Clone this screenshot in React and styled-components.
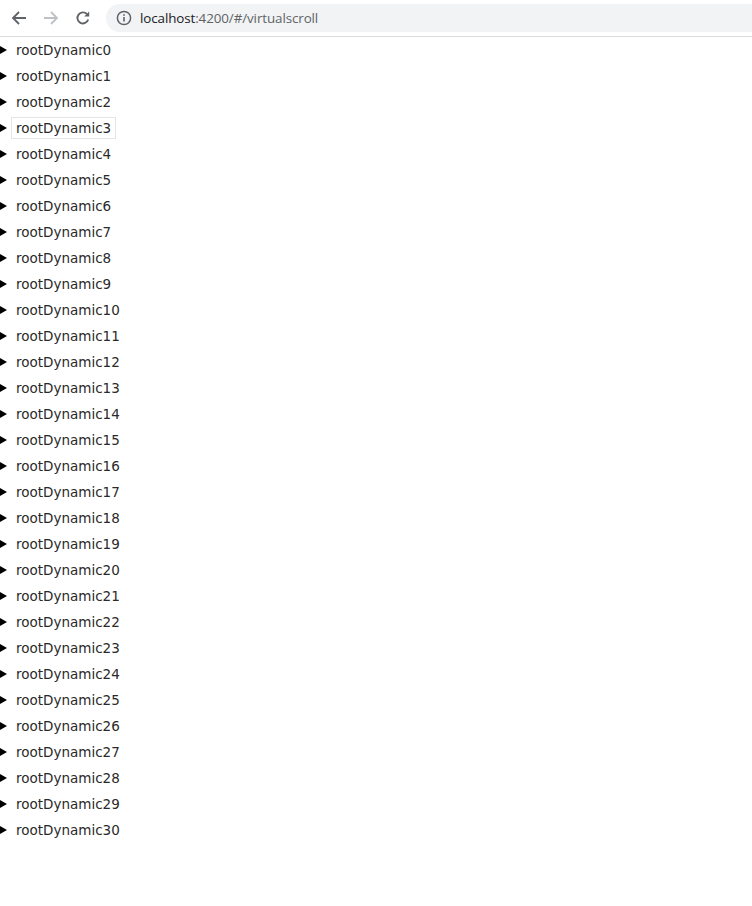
import React from "react";
import styled, { createGlobalStyle } from "styled-components";

const GlobalStyle = createGlobalStyle`
  body {
    margin: 0;
    background: #fff;
    font-family: "DejaVu Sans", Verdana, sans-serif;
  }
`;

const nodes = Array.from({ length: 31 }, (_, i) => `rootDynamic${i}`);

const Toolbar = () => (
  <Bar>
    <NavButton>
      <svg width="16" height="16" viewBox="0 0 16 16">
        <path d="M15 8H2.5M8 2L2 8l6 6" fill="none" stroke="#5f6368" strokeWidth="1.8" />
      </svg>
    </NavButton>
    <NavButton>
      <svg width="16" height="16" viewBox="0 0 16 16">
        <path d="M1 8h12.5M8 2l6 6-6 6" fill="none" stroke="#bdc1c6" strokeWidth="1.8" />
      </svg>
    </NavButton>
    <NavButton>
      <svg width="16" height="16" viewBox="0 0 16 16">
        <path d="M13.2 9.5A5.5 5.5 0 1 1 12 4.2" fill="none" stroke="#5f6368" strokeWidth="1.9" />
        <path d="M14.2 1.5v5h-5z" fill="#5f6368" />
      </svg>
    </NavButton>
    <Omnibox>
      <svg width="16" height="16" viewBox="0 0 16 16">
        <circle cx="8" cy="8" r="6.6" fill="none" stroke="#5f6368" strokeWidth="1.5" />
        <rect x="7.2" y="7" width="1.6" height="4.5" fill="#5f6368" />
        <rect x="7.2" y="4.2" width="1.6" height="1.6" fill="#5f6368" />
      </svg>
      <Url>
        localhost<Path>:4200/#/virtualscroll</Path>
      </Url>
    </Omnibox>
  </Bar>
);

export default function App() {
  return (
    <>
      <GlobalStyle />
      <Toolbar />
      <Tree>
        {nodes.map((name, i) => (
          <Row key={name}>
            <Toggle />
            <Label $focused={i === 3}>{name}</Label>
          </Row>
        ))}
      </Tree>
    </>
  );
}

const Bar = styled.div`
  height: 36px;
  border-bottom: 1px solid #dadce0;
  display: flex;
  align-items: center;
  padding-left: 3px;
`;

const NavButton = styled.div`
  width: 32px;
  height: 28px;
  display: flex;
  align-items: center;
  justify-content: center;
`;

const Omnibox = styled.div`
  flex: 1;
  height: 28px;
  margin-left: 7px;
  background: #f1f3f4;
  border-radius: 14px 0 0 14px;
  display: flex;
  align-items: center;
  padding-left: 10px;
  gap: 8px;
`;

const Url = styled.span`
  font-family: "Open Sans", "Noto Sans", sans-serif;
  font-size: 13.4px;
  color: #202124;
  letter-spacing: -0.1px;
`;

const Path = styled.span`
  color: #5f6368;
`;

const Tree = styled.div`
  display: flex;
  flex-direction: column;
`;

const Row = styled.div`
  height: 26px;
  display: flex;
  align-items: center;
`;

const Toggle = styled.span`
  width: 0;
  height: 0;
  border-left: 7px solid #000;
  border-top: 4px solid transparent;
  border-bottom: 4px solid transparent;
  margin-right: 4px;
`;

const Label = styled.span`
  font-size: 13.5px;
  color: #2a2a2a;
  padding: 2px 4px;
  border: 1px solid ${(p) => (p.$focused ? "#e6e6e6" : "transparent")};
`;
